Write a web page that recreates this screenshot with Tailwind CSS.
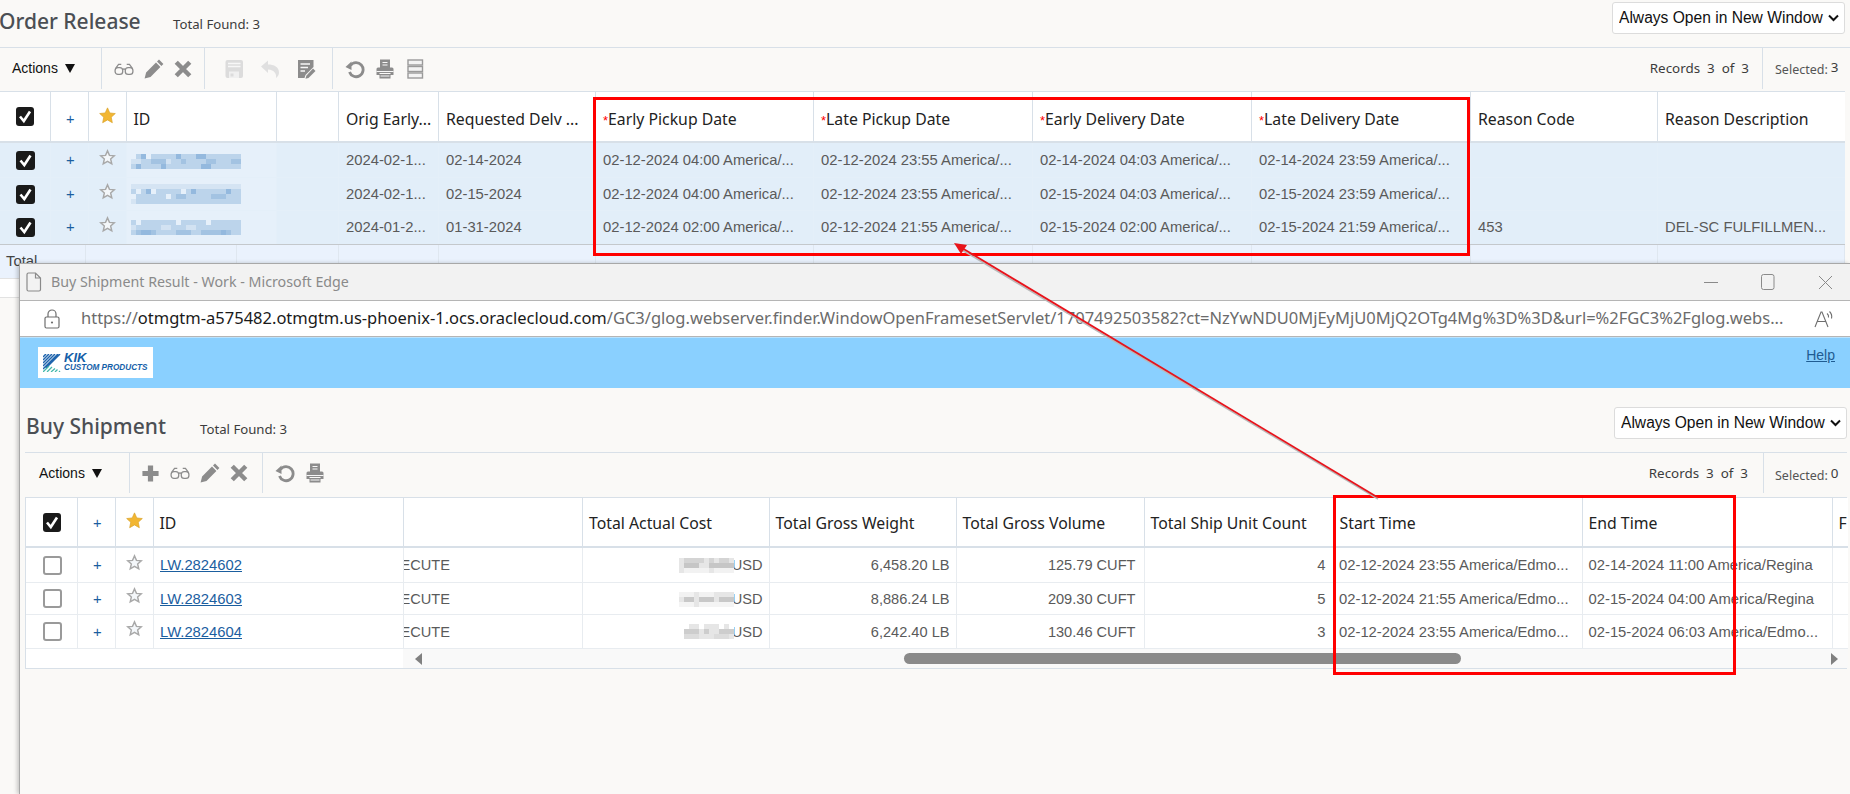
<!DOCTYPE html>
<html lang="en">
<head>
<meta charset="utf-8">
<title>Order Release</title>
<script src="https://cdn.jsdelivr.net/npm/@tailwindcss/browser@4"></script>
</head>
<body class="m-0 bg-[#faf9f7]">
<svg class="hidden" aria-hidden="true">
  <symbol id="i-glasses" viewBox="0 0 22 20"><g fill="none" stroke="#8c8c8c" stroke-width="1.4"><rect x="1.2" y="8.5" width="8.4" height="7.5" rx="3.2"/><rect x="12.4" y="8.5" width="8.4" height="7.5" rx="3.2"/><path d="M9.6 10.5q1.4-1.2 2.8 0M1.6 9.5 5 5h3M20.4 9.5 17 5h-3"/></g></symbol>
  <symbol id="i-pencil" viewBox="0 0 20 20"><path fill="#8c8c8c" d="M15 .6 19.4 5l-2 2L13 2.600zM12 3.600 16.400 8 6.500 17.900.6 19.400 2.100 13.500z"/></symbol>
  <symbol id="i-x" viewBox="0 0 20 20"><path stroke="#8c8c8c" stroke-width="5" d="M2.500 2.500 17.500 17.500M17.500 2.500 2.500 17.500"/></symbol>
  <symbol id="i-plus" viewBox="0 0 20 20"><path stroke="#8c8c8c" stroke-width="5.500" d="M10 1.500V18.500M1.500 10H18.500"/></symbol>
  <symbol id="i-save" viewBox="0 0 20 20"><rect x="1.500" y="1" width="17.500" height="18" rx="2" fill="#dcdcdc"/><path stroke="#f7f7f7" stroke-width="1.300" d="M4 4.500H16.500M4 7.500H16.500"/><rect x="5" y="12.500" width="10" height="6.500" fill="#f0f0f0"/><rect x="6.500" y="14.500" width="3" height="3" fill="#dcdcdc"/></symbol>
  <symbol id="i-undo" viewBox="0 0 20 20"><path fill="#e0e0e0" d="M1 7.500 8 1.500V5.500C14 5.500 19 8 19 13.500C19 15.500 18 17.500 16 19C16.800 15 14.500 11 8 10.500V14z"/></symbol>
  <symbol id="i-note" viewBox="0 0 20 20"><path fill="#8c8c8c" d="M2 1h15.500v7L9.500 16l-1 3H2z"/><path stroke="#f7f7f7" stroke-width="1.500" d="M4.500 5H14M4.500 8.500H12M4.500 12H9"/><path fill="#8c8c8c" d="M17 9.500l2.500 2.500-7 7-3 .8.800-3z"/></symbol>
  <symbol id="i-refresh" viewBox="0 0 20 20"><path fill="none" stroke="#8c8c8c" stroke-width="2.800" d="M5.500 6.500A7 7 0 1 1 4.500 13"/><path fill="#8c8c8c" d="M.5 8 6.500 2.500V11z"/></symbol>
  <symbol id="i-print" viewBox="0 0 20 20"><path fill="#8c8c8c" d="M5 .5h10v8H5zM1.500 10a1.500 1.500 0 0 1 1.500-1.500h14a1.500 1.500 0 0 1 1.500 1.500v6H15.500v-2h-11v2H1.500zM4.500 15h11v4.500h-11z"/><path stroke="#f7f7f7" stroke-width="1.100" d="M7.500 3.500h5M7.500 6h5M1.500 12.500H18.500M5.500 17H14.500"/></symbol>
  <symbol id="i-rows" viewBox="0 0 20 20"><g fill="#f3f3f3" stroke="#9a9a9a" stroke-width="1.400"><rect x="3" y="1" width="14.500" height="5"/><rect x="3" y="7.500" width="14.500" height="5"/><rect x="3" y="14" width="14.500" height="5"/></g></symbol>
  <symbol id="i-star" viewBox="0 0 20 20"><path fill="#f4f7fa" stroke="#a8a8a8" stroke-width="1.700" d="M10 2.200 12.300 7.500 18 8 13.700 11.800 15 17.500 10 14.500 5 17.500 6.300 11.800 2 8 7.700 7.500z"/></symbol>
  <symbol id="i-star-on" viewBox="0 0 20 20"><path fill="#f2b632" stroke="#d9a22a" stroke-width=".8" d="M10 1 12.700 7 19.200 7.700 14.400 12 15.700 18.500 10 15.200 4.300 18.500 5.600 12 .8 7.700 7.300 7z"/></symbol>
  <symbol id="i-check" viewBox="0 0 18 19"><path fill="none" stroke="#fff" stroke-width="2.600" d="M4 9.500 7.800 14 14 4.500"/></symbol>
</svg>

<div class="relative w-[1850px] h-[794px] overflow-hidden bg-[#faf9f7] font-['Liberation_Sans',sans-serif] text-[14.800px] text-[#5a5a5a]">

  <!-- Main page -->
  <header class="h-[47px] flex items-start">
    <h1 class="ml-[-1px] mt-[6px] w-[174px] text-[21px] leading-[30px] font-['Noto_Sans',sans-serif] font-medium text-[#4b4f54] whitespace-nowrap">Order Release</h1>
    <p class="mt-[14px] text-[13.200px] leading-[20px] font-['Noto_Sans',sans-serif] text-[#3c3c3c] whitespace-nowrap">Total Found: 3</p>
    <div class="relative ml-auto mr-[5px] mt-[2px] w-[233px] h-[32px]">
      <select class="appearance-none w-full h-full pl-[6px] bg-white border border-[#dcdcdc] rounded-[3px] text-[15.600px] text-[#111]"><option>Always Open in New Window</option></select>
      <svg class="absolute right-[6px] top-[12px] w-[11px] h-[8px]" viewBox="0 0 11 8"><path fill="none" stroke="#111" stroke-width="2" d="M1 1.500 5.500 6 10 1.500"/></svg>
    </div>
  </header>

  <div class="h-[44px] border-t border-[#d8e0e8] flex items-start text-[#333]">
    <div class="h-[41px] w-[102px] border-r border-[#d8e0e8] flex items-center pl-[12px] pb-[1px] text-[14px] text-[#111]">Actions<span class="ml-[7px] w-0 h-0 border-x-[5.500px] border-x-transparent border-t-[9px] border-t-[#111]"></span></div>
    <div class="h-[41px] w-[103px] border-r border-[#d8e0e8] flex items-center pl-[12px] gap-[10px]">
      <svg class="w-[20px] h-[20px]"><use href="#i-glasses"/></svg><svg class="w-[20px] h-[20px]"><use href="#i-pencil"/></svg><svg class="w-[18px] h-[18px]"><use href="#i-x"/></svg>
    </div>
    <div class="h-[41px] w-[128px] border-r border-[#d8e0e8] flex items-center pl-[19px] gap-[16px]">
      <svg class="w-[20px] h-[20px]"><use href="#i-save"/></svg><svg class="w-[20px] h-[20px]"><use href="#i-undo"/></svg><svg class="w-[20px] h-[20px]"><use href="#i-note"/></svg>
    </div>
    <div class="h-[41px] flex items-center pl-[12px] gap-[10px]">
      <svg class="w-[20px] h-[20px]"><use href="#i-refresh"/></svg><svg class="w-[20px] h-[20px]"><use href="#i-print"/></svg><svg class="w-[20px] h-[20px]"><use href="#i-rows"/></svg>
    </div>
    <div class="ml-auto h-[41px] flex items-center font-['Noto_Sans',sans-serif] text-[13.400px] text-[#3c3c3c]">
      <span class="whitespace-pre">Records  3  of  3</span>
      <span class="ml-[13px] h-full w-[88px] pl-[12px] border-l border-[#d8e0e8] flex items-center whitespace-nowrap"><span class="mt-[3px] text-[#555] text-[12.500px]">Selected:</span><span class="ml-[3px] mb-[2px]">3</span></span>
    </div>
  </div>

  <!-- Order release grid -->
  <div class="w-[1845px] border-t border-[#d8e0e8] grid grid-cols-[51px_37.500px_38px_150.500px_62px_100px_157px_218px_219px_219px_219px_187px_187px] grid-rows-[51px_35px_33px_34px]">
    <div class="col-span-full grid grid-cols-subgrid bg-white border-b-2 border-[#d8e0e8] leading-[54px] font-['Noto_Sans',sans-serif] text-[#222] text-[15.800px] *:border-r *:border-[#d8e0e8] *:pl-[7px] *:overflow-hidden *:whitespace-nowrap">
      <div class="pl-[16px]! flex items-center"><span class="w-[18px] h-[19px] bg-[#1a1a1a] rounded-[3px]"><svg class="w-full h-full"><use href="#i-check"/></svg></span></div>
      <div class="pl-[15px]! text-[#1b5e9f] text-[14.600px] font-['Liberation_Sans',sans-serif]">+</div>
      <div class="pl-[10px]! flex items-center"><svg class="w-[17px] h-[17px] mb-[3px]"><use href="#i-star-on"/></svg></div>
      <div>ID</div><div></div><div>Orig Early...</div><div>Requested Delv ...</div>
      <div><span class="text-[#f00] text-[13px] font-['Liberation_Sans',sans-serif]">*</span>Early Pickup Date</div><div><span class="text-[#f00] text-[13px] font-['Liberation_Sans',sans-serif]">*</span>Late Pickup Date</div><div><span class="text-[#f00] text-[13px] font-['Liberation_Sans',sans-serif]">*</span>Early Delivery Date</div><div><span class="text-[#f00] text-[13px] font-['Liberation_Sans',sans-serif]">*</span>Late Delivery Date</div>
      <div>Reason Code</div><div class="border-r-0!">Reason Description</div>
    </div>

    <div class="col-span-full grid grid-cols-subgrid bg-[#e2eef9] leading-[34px] border-b border-[#e4eff9] *:border-r *:border-[#e4eff9] *:pl-[7px] *:overflow-hidden *:whitespace-nowrap">
      <div class="pl-[16px]! flex items-center"><span class="w-[19px] h-[19px] bg-[#1a1a1a] rounded-[3px]"><svg class="w-full h-full"><use href="#i-check"/></svg></span></div>
      <div class="pl-[15px]! text-[#1b5e9f]">+</div>
      <div class="pl-[10px]! flex items-center"><svg class="w-[17px] h-[17px] mb-[6px]"><use href="#i-star"/></svg></div>
      <div class="pl-[4.500px]! flex items-center bg-[#e6f0fa]"><svg class="w-[110px] h-[15px] mt-[3px]" shape-rendering="crispEdges"><rect width="110" height="15" fill="#bcd4eb"/><path fill="none" stroke="#e6f0fa" stroke-width="5" stroke-dasharray="5 10 5 25 5 60" d="M0 2.500H110"/><path fill="none" stroke="#94b9de" stroke-width="5" stroke-dasharray="5 30 5 15 10 45" d="M10 2.500H110"/><path fill="none" stroke="#d2e2f2" stroke-width="5" stroke-dasharray="10 25 5 10 5 55" d="M0 7.500H110"/><path fill="none" stroke="#a3c3e2" stroke-width="5" stroke-dasharray="15 15 5 20 10 15" d="M20 7.500H110"/><path fill="none" stroke="#94b9de" stroke-width="5" stroke-dasharray="5 20 5 35 10 35" d="M5 12.500H110"/></svg></div>
      <div></div><div>2024-02-1...</div><div>02-14-2024</div>
      <div>02-12-2024 04:00 America/...</div><div>02-12-2024 23:55 America/...</div><div>02-14-2024 04:03 America/...</div><div>02-14-2024 23:59 America/...</div><div></div><div class="border-r-0!"></div>
    </div>

    <div class="col-span-full grid grid-cols-subgrid bg-[#e2eef9] leading-[32px] border-b border-[#e4eff9] *:border-r *:border-[#e4eff9] *:pl-[7px] *:overflow-hidden *:whitespace-nowrap">
      <div class="pl-[16px]! flex items-center"><span class="w-[19px] h-[19px] bg-[#1a1a1a] rounded-[3px]"><svg class="w-full h-full"><use href="#i-check"/></svg></span></div>
      <div class="pl-[15px]! text-[#1b5e9f]">+</div>
      <div class="pl-[10px]! flex items-center"><svg class="w-[17px] h-[17px] mb-[5px]"><use href="#i-star"/></svg></div>
      <div class="pl-[4.500px]! flex items-center bg-[#e6f0fa]"><svg class="w-[110px] h-[20px]" shape-rendering="crispEdges"><rect width="110" height="20" fill="#bcd4eb"/><rect width="110" height="5" fill="#d5e4f3"/><path fill="none" stroke="#e6f0fa" stroke-width="5" stroke-dasharray="5 10 5 25 5 60" d="M5 7.500H110"/><path fill="none" stroke="#94b9de" stroke-width="5" stroke-dasharray="5 40 5 30 5 25" d="M15 7.500H110"/><path fill="none" stroke="#e6f0fa" stroke-width="5" stroke-dasharray="5 30 5 70" d="M0 12.500H110"/><path fill="none" stroke="#a3c3e2" stroke-width="5" stroke-dasharray="10 25 15 40 10 10" d="M45 12.500H110"/><rect width="5" height="5" y="15" fill="#d5e4f3"/></svg></div>
      <div></div><div>2024-02-1...</div><div>02-15-2024</div>
      <div>02-12-2024 04:00 America/...</div><div>02-12-2024 23:55 America/...</div><div>02-15-2024 04:03 America/...</div><div>02-15-2024 23:59 America/...</div><div></div><div class="border-r-0!"></div>
    </div>

    <div class="col-span-full grid grid-cols-subgrid bg-[#e2eef9] leading-[32px] border-b border-[#c4c8cc] *:border-r *:border-[#e4eff9] *:pl-[7px] *:overflow-hidden *:whitespace-nowrap">
      <div class="pl-[16px]! flex items-center"><span class="w-[19px] h-[19px] bg-[#1a1a1a] rounded-[3px]"><svg class="w-full h-full"><use href="#i-check"/></svg></span></div>
      <div class="pl-[15px]! text-[#1b5e9f]">+</div>
      <div class="pl-[10px]! flex items-center"><svg class="w-[17px] h-[17px] mb-[6px]"><use href="#i-star"/></svg></div>
      <div class="pl-[4.500px]! flex items-center bg-[#e6f0fa]"><svg class="w-[110px] h-[15px]" shape-rendering="crispEdges"><rect width="110" height="15" fill="#bcd4eb"/><path fill="none" stroke="#e6f0fa" stroke-width="5" stroke-dasharray="5 35 5 25 5 35" d="M5 2.500H110"/><path fill="none" stroke="#d2e2f2" stroke-width="5" stroke-dasharray="5 25 10 15 10 45" d="M0 7.500H110"/><path fill="none" stroke="#a3c3e2" stroke-width="5" stroke-dasharray="20 20 15 10 30 15" d="M5 12.500H110"/><path fill="none" stroke="#94b9de" stroke-width="5" stroke-dasharray="10 70 5 25" d="M10 12.500H110"/></svg></div>
      <div></div><div>2024-01-2...</div><div>01-31-2024</div>
      <div>02-12-2024 02:00 America/...</div><div>02-12-2024 21:55 America/...</div><div>02-15-2024 02:00 America/...</div><div>02-15-2024 21:59 America/...</div><div>453</div><div class="border-r-0!">DEL-SC FULFILLMEN...</div>
    </div>
  </div>

  <div class="w-[1845px] h-[33px] bg-[#eaf2fd] grid grid-cols-[86px_150.500px_102.500px_100px_157px_218px_219px_219px_219px_187px_187px] leading-[33px] text-[#444] *:border-r *:border-[#dfe7f0] *:pl-[6px]">
    <div>Total</div><div></div><div></div><div></div><div></div><div></div><div></div><div></div><div></div><div></div><div></div>
  </div>
  <div class="h-[20px] w-[19px] bg-white border-t border-b border-[#e2e2e2]"></div>

  <!-- Floating browser window -->
  <section class="absolute left-[19px] top-[263px] right-0 bottom-0 flex flex-col bg-[#faf9f7] border-l border-t border-[#a8a8a8] shadow-[-2px_0_4px_rgba(0,0,0,0.2)]">
    <div class="h-[37px] shrink-0 bg-[#f2f2f2] border-b border-[#b5b5b5] flex items-center pl-[6px] font-['Noto_Sans',sans-serif] text-[14.250px] text-[#8a8a8a]">
      <svg class="w-[16px] h-[20px] mr-[9px]" viewBox="0 0 16 20"><path fill="none" stroke="#8a8a8a" stroke-width="1.200" d="M2.500 1h7l5 5v11.500a1.500 1.500 0 0 1-1.500 1.500H2.500A1.500 1.500 0 0 1 1 17.500V2.500A1.500 1.500 0 0 1 2.500 1zM9.500 1v5h5"/></svg>
      <span class="whitespace-nowrap">Buy Shipment Result - Work - Microsoft Edge</span>
      <div class="ml-auto flex items-center">
        <svg class="w-[14px] h-[14px]" viewBox="0 0 14 14"><path stroke="#8a8a8a" d="M0 7.500H14"/></svg>
        <svg class="ml-[43px] w-[14px] h-[16px]" viewBox="0 0 14 16"><rect x=".5" y=".5" width="12.500" height="15" rx="2" fill="none" stroke="#8a8a8a"/></svg>
        <svg class="ml-[43px] mr-[17px] w-[15px] h-[15px]" viewBox="0 0 15 15"><path stroke="#8a8a8a" d="M1 1 14 14M14 1 1 14"/></svg>
      </div>
    </div>
    <div class="h-[36px] shrink-0 bg-white border-b border-[#b5b5b5] flex items-center pl-[24px] font-['Noto_Sans',sans-serif] text-[16.500px]">
      <svg class="w-[16px] h-[20px] mr-[21px] shrink-0" viewBox="0 0 16 20"><path fill="none" stroke="#6e6e6e" stroke-width="1.200" d="M4 8V5a4 4 0 0 1 8 0v3M2.500 8h11a1.500 1.500 0 0 1 1.500 1.500v8a1.500 1.500 0 0 1-1.500 1.500h-11A1.500 1.500 0 0 1 1 17.500v-8A1.500 1.500 0 0 1 2.500 8z"/><circle cx="8" cy="13.500" r="1.100" fill="#6e6e6e"/></svg>
      <span class="w-[1716px] shrink-0 overflow-hidden whitespace-nowrap text-[#6b6b6b]">https://<span class="text-[#1a1a1a]">otmgtm-a575482.otmgtm.us-phoenix-1.ocs.oraclecloud.com</span>/GC3/glog.webserver.finder.WindowOpenFramesetServlet/1707492503582?ct=NzYwNDU0MjEyMjU0MjQ2OTg4Mg%3D%3D&amp;url=%2FGC3%2Fglog.webs...</span>
      <svg class="ml-[17px] w-[20px] h-[18px] shrink-0" viewBox="0 0 20 18"><path fill="none" stroke="#6e6e6e" stroke-width="1.100" d="M1 17 7 2h1l6 15M3.500 11.500h8.500M13 3.500q2 1.500 1.500 4M15.500 1.500q3 3 2 7"/></svg>
    </div>
    <div class="h-[51px] shrink-0 bg-[#8ad0ff] border-t border-white/40 flex items-start pl-[18px] pt-[9px] pr-[15px]">
      <div class="w-[115px] h-[31px] bg-white flex items-center pl-[5px] font-['Liberation_Sans',sans-serif] italic font-bold text-[#1560a8]">
        <svg class="w-[18px] h-[18px] mr-[3px] shrink-0" viewBox="0 0 18 18"><path fill="none" stroke="#1f64ad" stroke-width="1.500" d="M0 3 3 0M0 6 6 0M0 9 9 0M0 12 12 0M0 15 15 0M3 14 17 0"/><path fill="none" stroke="#45b8ab" stroke-width="1.300" d="M0 18 6 12M4 18 9 13M8 18 12 14.500M12 18 14.500 15.500M16 18 17 17"/></svg>
        <div><div class="text-[13px] leading-[10px]">KIK</div><div class="text-[8.200px] leading-[9px] whitespace-nowrap">CUSTOM PRODUCTS</div></div>
      </div>
      <a class="ml-auto text-[14px] mt-[-2px] text-[#1f5c92] underline">Help</a>
    </div>

    <div class="h-[64px] shrink-0 pl-[6px] pr-[3px] flex items-start">
      <h2 class="mt-[23px] w-[174px] text-[21px] leading-[30px] font-['Noto_Sans',sans-serif] font-medium text-[#4b4f54] whitespace-nowrap">Buy Shipment</h2>
      <p class="mt-[31px] text-[13.200px] leading-[20px] font-['Noto_Sans',sans-serif] text-[#3c3c3c] whitespace-nowrap">Total Found: 3</p>
      <div class="relative ml-auto mt-[19px] w-[233px] h-[32px]">
        <select class="appearance-none w-full h-full pl-[6px] bg-white border border-[#dcdcdc] rounded-[3px] text-[15.600px] text-[#111]"><option>Always Open in New Window</option></select>
        <svg class="absolute right-[6px] top-[12px] w-[11px] h-[8px]" viewBox="0 0 11 8"><path fill="none" stroke="#111" stroke-width="2" d="M1 1.500 5.500 6 10 1.500"/></svg>
      </div>
    </div>

    <div class="h-[45px] shrink-0 ml-[5px] mr-[3px] border-t border-[#d8e0e8] flex items-start">
      <div class="h-[40px] w-[105px] border-r border-[#d8e0e8] flex items-center pl-[14px] text-[14px] text-[#111]">Actions<span class="ml-[7px] w-0 h-0 border-x-[5.500px] border-x-transparent border-t-[9px] border-t-[#111]"></span></div>
      <div class="h-[40px] w-[133px] border-r border-[#d8e0e8] flex items-center pl-[11px] gap-[10px]">
        <svg class="w-[19px] h-[19px]"><use href="#i-plus"/></svg><svg class="w-[20px] h-[20px]"><use href="#i-glasses"/></svg><svg class="w-[20px] h-[20px]"><use href="#i-pencil"/></svg><svg class="w-[18px] h-[18px]"><use href="#i-x"/></svg>
      </div>
      <div class="h-[40px] flex items-center pl-[12px] gap-[10px]">
        <svg class="w-[20px] h-[20px]"><use href="#i-refresh"/></svg><svg class="w-[20px] h-[20px]"><use href="#i-print"/></svg>
      </div>
      <div class="ml-auto h-[40px] flex items-center font-['Noto_Sans',sans-serif] text-[13.400px] text-[#3c3c3c]">
        <span class="whitespace-pre">Records  3  of  3</span>
        <span class="ml-[15px] h-full w-[84px] pl-[11px] border-l border-[#d8e0e8] flex items-center whitespace-nowrap"><span class="mt-[6px] text-[#555] text-[12.500px]">Selected:</span><span class="ml-[3px]">0</span></span>
      </div>
    </div>

    <!-- Buy shipment grid -->
    <div class="ml-[5px] mr-[3px] h-[172px] border border-[#d8e0e8] grid grid-cols-[52px_37.500px_38px_250px_179.500px_186.500px_187px_188px_189px_249px_250px_15px] grid-rows-[50px_35px_32px_34px_1fr]">
      <div class="col-span-full grid grid-cols-subgrid bg-white border-b-2 border-[#d8e0e8] leading-[51px] font-['Noto_Sans',sans-serif] text-[#222] text-[15.800px] *:border-r *:border-[#d8e0e8] *:pl-[6px] *:overflow-hidden *:whitespace-nowrap">
        <div class="pl-[17px]! flex items-center"><span class="w-[18px] h-[19px] bg-[#1a1a1a] rounded-[3px]"><svg class="w-full h-full"><use href="#i-check"/></svg></span></div>
        <div class="pl-[15px]! text-[#1b5e9f] text-[14.600px] font-['Liberation_Sans',sans-serif]">+</div>
        <div class="pl-[10px]! flex items-center"><svg class="w-[17px] h-[17px] mb-[3px]"><use href="#i-star-on"/></svg></div>
        <div>ID</div><div></div><div>Total Actual Cost</div><div>Total Gross Weight</div><div>Total Gross Volume</div><div>Total Ship Unit Count</div><div>Start Time</div><div>End Time</div><div class="border-r-0!">F</div>
      </div>

      <div class="col-span-full grid grid-cols-subgrid bg-white leading-[34px] border-b border-[#e8ecf0] *:border-r *:border-[#e8ecf0] *:overflow-hidden *:whitespace-nowrap">
        <div class="pl-[17px] flex items-center"><span class="w-[19px] h-[19px] border-2 border-[#9a9a9a] rounded-[3px]"></span></div>
        <div class="pl-[15px] text-[#1b5e9f]">+</div>
        <div class="pl-[10px] flex items-center"><svg class="w-[17px] h-[17px] mb-[6px]"><use href="#i-star"/></svg></div>
        <div class="pl-[6.500px]"><a class="text-[#1b5e9f] underline">LW.2824602</a></div>
        <div class="pl-0 text-[14.600px]"><span class="ml-[-3px]">ECUTE</span></div>
        <div class="text-right pr-[6px] relative text-[14.600px]"><svg class="absolute left-[96px] top-[10px] w-[55px] h-[15px]" shape-rendering="crispEdges"><rect y="0" width="55" height="15" fill="#e6e6e6"/><path fill="none" stroke="#d4d4d4" stroke-width="5" stroke-dasharray="20 5 5 5 10 10" d="M5 2.500H55"/><path fill="none" stroke="#c6c6c6" stroke-width="5" stroke-dasharray="15 10 25" d="M5 7.500H55"/><path fill="none" stroke="#f2f2f2" stroke-width="5" stroke-dasharray="25 5 20" d="M5 12.500H55"/></svg>USD</div>
        <div class="text-right pr-[6px] text-[14.600px]">6,458.20 LB</div><div class="text-right pr-[8px] text-[14.600px]">125.79 CUFT</div><div class="text-right pr-[7px]">4</div>
        <div class="pl-[5.500px]">02-12-2024 23:55 America/Edmo...</div><div class="pl-[6px]">02-14-2024 11:00 America/Regina</div><div class="border-r-0!"></div>
      </div>

      <div class="col-span-full grid grid-cols-subgrid bg-white leading-[32px] border-b border-[#e8ecf0] *:border-r *:border-[#e8ecf0] *:overflow-hidden *:whitespace-nowrap">
        <div class="pl-[17px] flex items-center"><span class="w-[19px] h-[19px] border-2 border-[#9a9a9a] rounded-[3px]"></span></div>
        <div class="pl-[15px] text-[#1b5e9f]">+</div>
        <div class="pl-[10px] flex items-center"><svg class="w-[17px] h-[17px] mb-[6px]"><use href="#i-star"/></svg></div>
        <div class="pl-[6.500px]"><a class="text-[#1b5e9f] underline">LW.2824603</a></div>
        <div class="pl-0 text-[14.600px]"><span class="ml-[-3px]">ECUTE</span></div>
        <div class="text-right pr-[6px] relative text-[14.600px]"><svg class="absolute left-[96px] top-[9px] w-[55px] h-[15px]" shape-rendering="crispEdges"><rect y="0" width="55" height="15" fill="#e6e6e6"/><path fill="none" stroke="#f2f2f2" stroke-width="5" stroke-dasharray="15 5 15 20" d="M0 2.500H55"/><path fill="none" stroke="#c8c8c8" stroke-width="5" stroke-dasharray="10 5 15 5 20" d="M5 7.500H55"/><path fill="none" stroke="#f4f4f4" stroke-width="5" stroke-dasharray="15 5 35" d="M0 12.500H55"/></svg>USD</div>
        <div class="text-right pr-[6px] text-[14.600px]">8,886.24 LB</div><div class="text-right pr-[8px] text-[14.600px]">209.30 CUFT</div><div class="text-right pr-[7px]">5</div>
        <div class="pl-[5.500px]">02-12-2024 21:55 America/Edmo...</div><div class="pl-[6px]">02-15-2024 04:00 America/Regina</div><div class="border-r-0!"></div>
      </div>

      <div class="col-span-full grid grid-cols-subgrid bg-white leading-[34px] border-b border-[#e8ecf0] *:border-r *:border-[#e8ecf0] *:overflow-hidden *:whitespace-nowrap">
        <div class="pl-[17px] flex items-center"><span class="w-[19px] h-[19px] border-2 border-[#9a9a9a] rounded-[3px]"></span></div>
        <div class="pl-[15px] text-[#1b5e9f]">+</div>
        <div class="pl-[10px] flex items-center"><svg class="w-[17px] h-[17px] mb-[6px]"><use href="#i-star"/></svg></div>
        <div class="pl-[6.500px]"><a class="text-[#1b5e9f] underline">LW.2824604</a></div>
        <div class="pl-0 text-[14.600px]"><span class="ml-[-3px]">ECUTE</span></div>
        <div class="text-right pr-[6px] relative text-[14.600px]"><svg class="absolute left-[96px] top-[9px] w-[55px] h-[15px]" shape-rendering="crispEdges"><rect y="0" x="5" width="50" height="15" fill="#e6e6e6"/><path fill="none" stroke="#fff" stroke-width="5" stroke-dasharray="5 10 5 15 5" d="M5 2.500H55"/><path fill="none" stroke="#cdcdcd" stroke-width="5" stroke-dasharray="15 5 5 10 15" d="M5 7.500H55"/><path fill="none" stroke="#dcdcdc" stroke-width="5" stroke-dasharray="15 15 15" d="M5 12.500H55"/></svg>USD</div>
        <div class="text-right pr-[6px] text-[14.600px]">6,242.40 LB</div><div class="text-right pr-[8px] text-[14.600px]">130.46 CUFT</div><div class="text-right pr-[7px]">3</div>
        <div class="pl-[5.500px]">02-12-2024 23:55 America/Edmo...</div><div class="pl-[6px]">02-15-2024 06:03 America/Edmo...</div><div class="border-r-0!"></div>
      </div>

      <div class="col-span-full bg-white flex">
        <div class="w-[377px] shrink-0"></div>
        <div class="flex-1 bg-[#f9f9f9] flex items-center pl-[12px] pr-[10px]">
          <span class="w-0 h-0 border-y-[6.500px] border-y-transparent border-r-[7px] border-r-[#808080]"></span>
          <div class="ml-[482px] w-[557px] h-[11px] rounded-full bg-[#8a8a8a]"></div>
          <span class="ml-auto w-0 h-0 border-y-[6.500px] border-y-transparent border-l-[7px] border-l-[#808080]"></span>
        </div>
      </div>
    </div>
  </section>

  <!-- Annotations -->
  <div class="absolute left-[593px] top-[97px] w-[877px] h-[159px] border-[3px] border-[#ff0000]"></div>
  <div class="absolute left-[1333px] top-[495px] w-[403px] h-[180px] border-[3px] border-[#ff0000]"></div>
  <svg class="absolute inset-0 w-[1850px] h-[794px] pointer-events-none" viewBox="0 0 1850 794">
    <path stroke="#b9b9b9" stroke-width="1.500" d="M962 250 1378 499"/>
    <path stroke="#e8141c" stroke-width="1.800" d="M962 248 1377 497"/>
    <path fill="#e8141c" d="M954 243 967 245 961 254z"/>
  </svg>
</div>
</body>
</html>
